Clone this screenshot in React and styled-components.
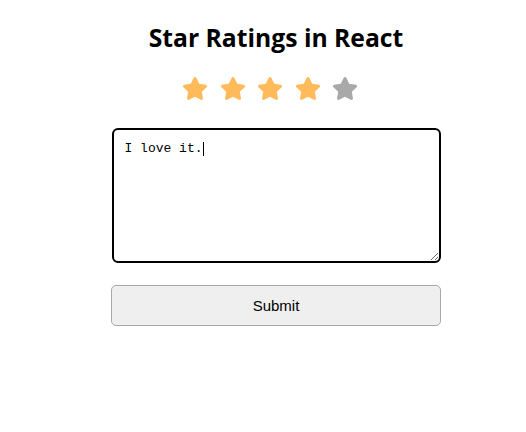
import React, { useEffect, useRef, useState } from "react";
import styled, { createGlobalStyle } from "styled-components";
import { FaStar } from "react-icons/fa";

const GlobalStyle = createGlobalStyle`
  html, body { margin: 0; padding: 0; background: #ffffff; }
  body { font-family: "Open Sans", "Noto Sans", sans-serif; }
`;

const Page = styled.div`
  display: flex;
  flex-direction: column;
  align-items: center;
  padding: 24px 0 0 26px;
`;

const Title = styled.h2`
  margin: 0;
  font-family: "Open Sans", "Noto Sans", sans-serif;
  font-size: 24.7px;
  line-height: 28px;
  font-weight: 700;
  color: #000;
`;

const StarRow = styled.div`
  display: flex;
  margin-top: 25px;
`;

const Star = styled(FaStar)`
  display: block;
  width: 26px;
  height: 23px;
  margin-right: 11.5px;
  color: ${(p) => (p.$on ? "#FFBA5A" : "#a9a9a9")};
  cursor: pointer;
`;

const Field = styled.div`
  position: relative;
  margin-top: 28px;
`;

const Comment = styled.textarea`
  display: block;
  box-sizing: border-box;
  width: 329px;
  height: 135px;
  padding: 11px 11px;
  border: 2px solid #000;
  border-radius: 6px;
  outline: none;
  font-family: "Liberation Mono", monospace;
  font-size: 13px;
  line-height: 15px;
  color: #000;
  caret-color: transparent;
`;

const Caret = styled.span`
  position: absolute;
  left: 91px;
  top: 14px;
  width: 1px;
  height: 14px;
  background: #000;
  pointer-events: none;
`;

const SubmitButton = styled.button`
  box-sizing: border-box;
  margin-top: 22px;
  width: 330px;
  height: 41px;
  border: 1px solid #a9a9a9;
  border-radius: 5px;
  background: #efefef;
  font-family: "Liberation Sans", Arial, sans-serif;
  font-size: 15px;
  color: #000;
  cursor: pointer;
`;

export default function App() {
  const [rating] = useState(4);
  const [text, setText] = useState("I love it.");
  const ref = useRef(null);

  useEffect(() => {
    const el = ref.current;
    if (el) {
      el.focus();
      el.setSelectionRange(el.value.length, el.value.length);
    }
  }, []);

  return (
    <>
      <GlobalStyle />
      <Page>
        <Title>Star Ratings in React</Title>
        <StarRow>
          {[1, 2, 3, 4, 5].map((n) => (
            <Star key={n} $on={n <= rating} />
          ))}
        </StarRow>
        <Field>
          <Comment
            ref={ref}
            value={text}
            onChange={(e) => setText(e.target.value)}
            placeholder="What's your feedback"
          />
          <Caret />
        </Field>
        <SubmitButton>Submit</SubmitButton>
      </Page>
    </>
  );
}
